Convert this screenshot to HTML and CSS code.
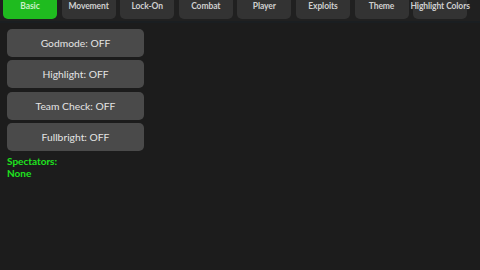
FILE: index.html
```html
<!DOCTYPE html>
<html>
<head>
<meta charset="utf-8">
<link rel="stylesheet" href="styles.css">
</head>
<body>
<div class="app">
  <div class="tabbar">
    <div class="tab active">Basic</div>
    <div class="tab">Movement</div>
    <div class="tab">Lock-On</div>
    <div class="tab">Combat</div>
    <div class="tab">Player</div>
    <div class="tab">Exploits</div>
    <div class="tab">Theme</div>
    <div class="tab">Highlight Colors</div>
  </div>
  <div class="content">
    <div class="btn">Godmode: OFF</div>
    <div class="btn">Highlight: OFF</div>
    <div class="btn">Team Check: OFF</div>
    <div class="btn">Fullbright: OFF</div>
    <div class="spect">Spectators:<br>None</div>
  </div>
</div>
</body>
</html>
```
FILE: styles.css
```css
html, body {
  margin: 0;
  padding: 0;
  background: #1c1c1c;
  width: 480px;
  height: 270px;
  overflow: hidden;
  font-family: Lato, "Open Sans", sans-serif;
}
.app {
  display: flex;
  flex-direction: column;
  height: 270px;
}
.tabbar {
  display: flex;
  gap: 4.6px;
  padding: 0 0 0 3px;
  height: 21px;
  background: #202020;
  border-bottom: 2px solid #1a1e21;
}
.tab {
  width: 54px;
  height: 19px;
  flex: none;
  background: #333333;
  border-radius: 0 0 5px 5px;
  color: #cfcfcf;
  font-size: 8.5px;
  font-weight: 700;
  display: flex;
  align-items: flex-start;
  justify-content: center;
  padding-top: 1px;
  box-sizing: border-box;
  white-space: nowrap;
  letter-spacing: -0.1px;
}
.tab.active {
  background: #1fbb1f;
  color: #c8f0c8;
}
.content {
  display: flex;
  flex-direction: column;
  gap: 3.3px;
  padding: 6px 0 0 7px;
}
.btn {
  width: 137px;
  height: 28px;
  background: #4a4a4a;
  border-radius: 5px;
  color: #e4e4e4;
  font-size: 10.3px;
  font-weight: 400;
  display: flex;
  align-items: center;
  justify-content: center;
}
.spect {
  color: #1ee41e;
  font-weight: 700;
  font-size: 10px;
  line-height: 12px;
  margin-top: 1px;
}
```
